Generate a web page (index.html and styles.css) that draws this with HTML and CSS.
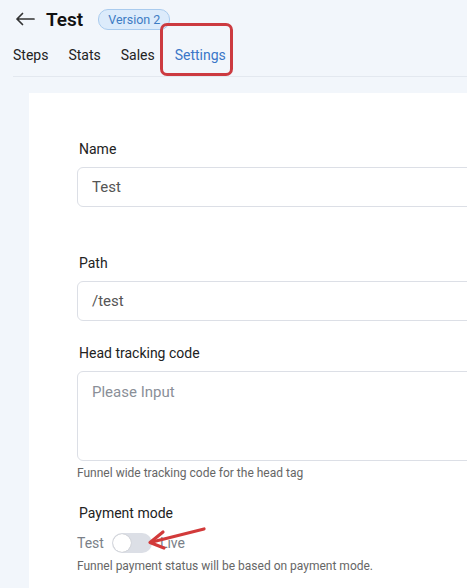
FILE: index.html
```html
<!DOCTYPE html>
<html>
<head>
<meta charset="utf-8">
<link rel="stylesheet" href="styles.css">
</head>
<body>
<header class="header">
  <div class="title-row">
    <svg class="back" width="20" height="14" viewBox="0 0 20 14"><path d="M19 7H2M7.5 1.5L2 7l5.5 5.5" fill="none" stroke="#333" stroke-width="1.7" stroke-linecap="round" stroke-linejoin="round"/></svg>
    <span class="title">Test</span>
    <span class="badge">Version 2</span>
  </div>
  <nav class="tabs">
    <span class="tab">Steps</span>
    <span class="tab">Stats</span>
    <span class="tab">Sales</span>
    <span class="tab active">Settings</span>
  </nav>
  <div class="highlight"></div>
</header>
<main class="card">
  <div class="field first">
    <label class="label">Name</label>
    <div class="input">Test</div>
  </div>
  <div class="field spaced">
    <label class="label">Path</label>
    <div class="input">/test</div>
  </div>
  <div class="field">
    <label class="label">Head tracking code</label>
    <div class="textarea">Please Input</div>
    <div class="help">Funnel wide tracking code for the head tag</div>
  </div>
  <div class="field pay">
    <label class="label">Payment mode</label>
    <div class="switch-row">
      <span class="sw-text">Test</span>
      <span class="switch"><span class="knob"></span></span>
      <span class="sw-text">Live</span>
    </div>
    <div class="help">Funnel payment status will be based on payment mode.</div>
  </div>
  <svg class="arrow" width="70" height="40" viewBox="0 0 70 40"><path d="M61 7L9 20" fill="none" stroke="#d23a3a" stroke-width="3.2" stroke-linecap="round"/><path d="M20 10L7 20.5 21 26" fill="none" stroke="#d23a3a" stroke-width="3.2" stroke-linecap="round" stroke-linejoin="round"/></svg>
</main>
</body>
</html>
```
FILE: styles.css
```css
html, body {
  margin: 0;
  padding: 0;
  background: #f2f6fb;
  font-family: Roboto, "Liberation Sans", sans-serif;
  overflow: hidden;
  height: 588px;
}
.header {
  position: relative;
  margin-left: 13px;
  border-bottom: 1px solid #e3e8ef;
  height: 76px;
}
.title-row {
  display: flex;
  align-items: center;
  height: 38px;
}
.back {
  margin-left: 2px;
  margin-right: 11px;
}
.title {
  font-size: 19px;
  font-weight: 600;
  color: #111;
  margin-right: 15px;
}
.badge {
  font-size: 12.5px;
  color: #3d7cc4;
  background: #dcebfb;
  border: 1px solid #a9cbee;
  border-radius: 10px;
  padding: 2px 9px;
  line-height: 15px;
}
.tabs {
  display: flex;
  gap: 20px;
  font-size: 14px;
  color: #222;
  height: 34px;
  align-items: center;
}
.tab.active {
  color: #3a76c8;
}
.highlight {
  position: absolute;
  left: 147px;
  top: 23px;
  width: 67px;
  height: 47px;
  border: 3px solid #cc3a40;
  border-radius: 7px;
}
.card {
  position: relative;
  background: #fff;
  margin: 16px 0 0 29px;
  padding: 46px 0 0 48px;
  height: 449px;
  overflow: hidden;
}
.field {
  display: flex;
  flex-direction: column;
}
.spaced {
  margin-top: 46px;
}
.field + .field:not(.spaced) {
  margin-top: 22px;
}
.field.pay {
  margin-top: 27px;
}
.label {
  font-size: 14px;
  line-height: 20px;
  color: #222;
  margin: 0 0 8px 2px;
}
.input, .textarea {
  width: 420px;
  flex-shrink: 0;
  box-sizing: border-box;
  border: 1px solid #dcdfe6;
  border-radius: 6px;
  font-size: 15px;
  color: #555;
  padding: 0 14px;
}
.input {
  height: 40px;
  line-height: 38px;
}
.textarea {
  height: 90px;
  padding-top: 9px;
  line-height: 22px;
  color: #8a8f98;
}
.help {
  font-size: 12px;
  line-height: 16px;
  color: #666;
  margin-top: 4px;
}
.pay .label {
  margin-bottom: 10px;
}
.switch-row {
  display: flex;
  align-items: center;
  height: 20px;
  gap: 8px;
  font-size: 14px;
}
.sw-text {
  color: #7a7f88;
}
.switch {
  position: relative;
  width: 40px;
  height: 20px;
  border-radius: 10px;
  background: #dcdfe6;
}
.knob {
  position: absolute;
  left: 1px;
  top: 1px;
  width: 18px;
  height: 18px;
  border-radius: 50%;
  background: #fff;
  box-shadow: 0 0 1px rgba(0,0,0,0.3);
}
.pay .help {
  margin-top: 5px;
}
.arrow {
  position: absolute;
  left: 114px;
  top: 429px;
}
```
